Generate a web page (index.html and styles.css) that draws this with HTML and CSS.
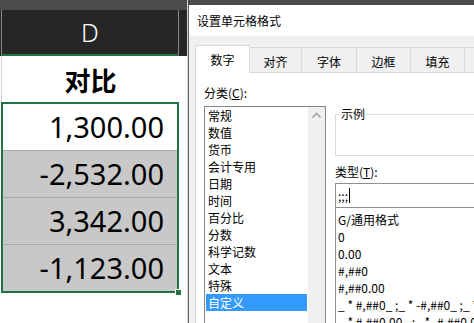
FILE: index.html
```html
<!DOCTYPE html>
<html lang="zh-CN">
<head>
    <meta charset="UTF-8" />
    <title>设置单元格格式</title>
    <link rel="stylesheet" href="styles.css">
</head>
<body>
    <div class="sheet">
        <div class="topbar"></div>
        <div class="head">
            <div class="head-d">D</div>
        </div>
        <div class="title-row">对比</div>
        <div class="sel">
            <div class="cell">1,300.00</div>
            <div class="cell filled">-2,532.00</div>
            <div class="cell filled">3,342.00</div>
            <div class="cell filled">-1,123.00</div>
            <span class="handle"></span>
        </div>
    </div>

    <div class="dialog">
        <div class="dlg-title">设置单元格格式</div>
        <div class="dlg-body">
            <div class="tabs">
                <div class="tab active">数字</div>
                <div class="tab w52">对齐</div>
                <div class="tab w55">字体</div>
                <div class="tab">边框</div>
                <div class="tab">填充</div>
                <div class="tab"></div>
            </div>
            <div class="panel">
                <div class="col-left">
                    <div class="label">分类(<u>C</u>):</div>
                    <div class="listbox">
                        <ul class="items">
                            <li>常规</li>
                            <li>数值</li>
                            <li>货币</li>
                            <li>会计专用</li>
                            <li>日期</li>
                            <li>时间</li>
                            <li>百分比</li>
                            <li>分数</li>
                            <li>科学记数</li>
                            <li>文本</li>
                            <li>特殊</li>
                            <li class="selected">自定义</li>
                        </ul>
                        <div class="scrollbar">
                            <svg width="17" height="17" viewBox="0 0 17 17">
                                <polyline points="4.5,10.5 8.5,6.5 12.5,10.5" fill="none" stroke="#a3a3a3" stroke-width="1.6"/>
                            </svg>
                        </div>
                    </div>
                </div>
                <div class="col-right">
                    <fieldset class="sample">
                        <legend>示例</legend>
                    </fieldset>
                    <div class="label type-label">类型(<u>T</u>):</div>
                    <div class="type-input">;;;<span class="caret"></span></div>
                    <ul class="type-list">
                        <li>G/通用格式</li>
                        <li>0</li>
                        <li>0.00</li>
                        <li>#,##0</li>
                        <li>#,##0.00</li>
                        <li>_ * #,##0_ ;_ * -#,##0_ ;_ * "-"_ ;_ @_ </li>
                        <li>_ * #,##0.00_ ;_ * -#,##0.00_ ;_ * "-"??_ ;_ @_ </li>
                    </ul>
                </div>
            </div>
        </div>
    </div>
</body>
</html>
```

FILE: styles.css
```css
body {
    margin: 0;
    width: 474px;
    height: 323px;
    overflow: hidden;
    display: flex;
    background-color: #4b4b4b;
    font-family: "Noto Sans CJK SC", sans-serif;
    font-size: 12px;
    color: #000;
}

/* spreadsheet */

.sheet {
    width: 188px;
    flex-shrink: 0;
    background-color: #fff;
    border-right: 1px solid #d4d4d4;
    box-sizing: border-box;
}

.topbar {
    height: 10px;
    background-color: #4b4b4b;
}

.head {
    height: 46px;
    background-color: #262626;
    padding-left: 1px;
}

.head-d {
    width: 178px;
    height: 46px;
    box-sizing: border-box;
    border-left: 1px solid #8a8a8a;
    border-right: 1px solid #8a8a8a;
    border-bottom: 2px solid #217346;
    display: flex;
    align-items: center;
    justify-content: center;
    color: #fff;
    font-family: "Noto Sans", sans-serif;
    font-size: 25px;
    font-weight: 300;
}

.title-row {
    width: 178px;
    height: 46px;
    margin-left: 1px;
    box-sizing: border-box;
    border-left: 1px solid #d4d4d4;
    display: flex;
    align-items: center;
    justify-content: center;
    font-size: 26px;
    font-weight: bold;
}

.sel {
    position: relative;
    width: 178px;
    margin-left: 1px;
    box-sizing: border-box;
    border: 2px solid #217346;
}

.cell {
    height: 46px;
    box-sizing: border-box;
    padding-right: 13px;
    text-align: right;
    font-family: "Noto Sans", sans-serif;
    font-size: 29px;
    line-height: 45px;
    color: #000;
}

.cell.filled {
    height: 47px;
    background-color: #c8c8c8;
    border-top: 1px solid #a9a9a9;
}

.handle {
    position: absolute;
    right: -5px;
    bottom: -5px;
    width: 5px;
    height: 5px;
    background-color: #217346;
    border: 1px solid #fff;
}

/* dialog */

.dialog {
    flex: 1;
    min-width: 0;
    margin-top: 5px;
    background-color: #fff;
    border-left: 1px solid #5f5f5f;
    display: flex;
    flex-direction: column;
}

.dlg-title {
    height: 31px;
    line-height: 31px;
    padding-left: 8px;
    flex-shrink: 0;
}

.dlg-body {
    flex: 1;
    background-color: #f0f0f0;
    padding: 9px 0 0 6px;
}

.tabs {
    display: flex;
    align-items: flex-end;
    height: 27px;
}

.tab {
    width: 54px;
    height: 25px;
    flex-shrink: 0;
    box-sizing: border-box;
    border: 1px solid #d9d9d9;
    border-left: none;
    border-bottom: none;
    display: flex;
    align-items: center;
    justify-content: center;
    padding-top: 2px;
}

.tab.w52 {
    width: 52px;
}

.tab.w55 {
    width: 55px;
}

.tab.active {
    width: 55px;
    height: 28px;
    margin-bottom: -1px;
    border-left: 1px solid #d9d9d9;
    background-color: #fff;
    position: relative;
    z-index: 1;
    padding-top: 0;
}

.panel {
    display: flex;
    background-color: #fff;
    border-top: 1px solid #d9d9d9;
    border-left: 1px solid #d9d9d9;
    padding-left: 8px;
    height: 260px;
}

.label {
    line-height: 16px;
    margin-top: 12px;
}

.col-left {
    width: 122px;
    flex-shrink: 0;
}

.listbox {
    margin-top: 5px;
    height: 230px;
    border: 1px solid #828790;
    display: flex;
}

.items {
    list-style: none;
    margin: 0;
    padding: 0 1px;
    width: 101px;
}

.items li {
    height: 17px;
    line-height: 17px;
    padding-left: 2px;
}

.items li.selected {
    background-color: #3399ff;
    color: #fff;
}

.scrollbar {
    width: 17px;
    background-color: #f0f0f0;
}

.scrollbar svg {
    display: block;
}

.col-right {
    width: 220px;
    flex-shrink: 0;
    margin-left: 9px;
    padding-top: 33px;
}

.sample {
    margin: 0;
    padding: 0;
    height: 50px;
    box-sizing: border-box;
    border: 1px solid #dcdcdc;
}

.sample legend {
    padding: 0 1px;
    margin-left: 4px;
    line-height: 16px;
}

.type-label {
    margin-top: 8px;
}

.type-input {
    margin-top: 3px;
    height: 25px;
    box-sizing: border-box;
    border: 1px solid #8f8f8f;
    padding-left: 2px;
    line-height: 23px;
    display: flex;
    align-items: center;
}

.caret {
    display: inline-block;
    width: 1px;
    height: 15px;
    margin-left: 1px;
    background-color: #000;
}

.type-list {
    list-style: none;
    margin: 0;
    padding: 3px 0 0 2px;
    height: 120px;
    border: 1px solid #8f8f8f;
    border-top: none;
}

.type-list li {
    height: 17px;
    line-height: 17px;
    white-space: pre;
}
```
